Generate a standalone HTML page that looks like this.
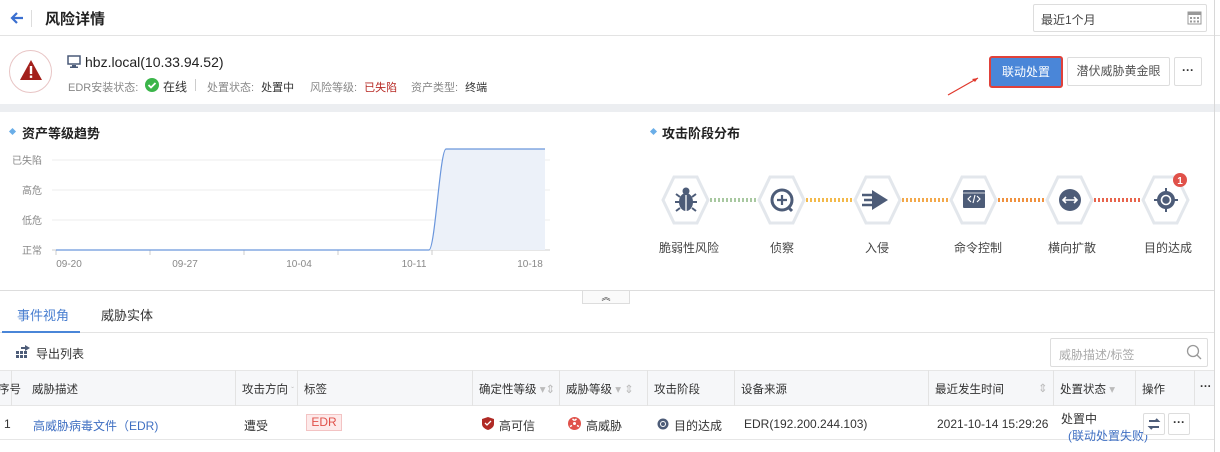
<!DOCTYPE html><html><head><meta charset="utf-8"><style>
*{margin:0;padding:0;box-sizing:border-box}
body{width:1220px;height:452px;overflow:hidden;background:#fff;font-family:"Liberation Sans","Noto Sans CJK SC",sans-serif;font-size:12px;color:#333;position:relative}
.a{position:absolute}
.btn{position:absolute;border:1px solid #ddd;border-radius:2px;background:#fff;text-align:center;font-size:12px;color:#555}
</style></head><body>
<!-- header -->
<div class="a" style="left:0;top:0;width:1220px;height:36px;border-bottom:1px solid #e3e3e3"></div>
<svg class="a" style="left:9px;top:11px" width="16" height="14"><path d="M14 7H3M8 2L3 7l5 5" stroke="#3a6fd0" stroke-width="2.2" fill="none"/></svg>
<div class="a" style="left:31px;top:10px;width:1px;height:17px;background:#ddd"></div>
<div class="a" style="left:45px;top:8px;font-size:15px;font-weight:bold;color:#222">风险详情</div>
<div class="a" style="left:1033px;top:4px;width:174px;height:28px;border:1px solid #ddd;border-radius:2px"></div>
<div class="a" style="left:1041px;top:11px;color:#444">最近1个月</div>
<svg class="a" style="left:1187px;top:10px" width="15" height="15"><rect x="1" y="2" width="13" height="12" fill="none" stroke="#999"/><rect x="1" y="2" width="13" height="3" fill="#999"/><g fill="#999"><rect x="3" y="7" width="2" height="2"/><rect x="6.5" y="7" width="2" height="2"/><rect x="10" y="7" width="2" height="2"/><rect x="3" y="10.5" width="2" height="2"/><rect x="6.5" y="10.5" width="2" height="2"/><rect x="10" y="10.5" width="2" height="2"/></g></svg>
<!-- info -->
<div class="a" style="left:9px;top:50px;width:43px;height:43px;border:1px solid #e8c5c5;border-radius:50%"></div>
<svg class="a" style="left:19px;top:59px" width="24" height="22"><path d="M12 1L23 21H1Z" fill="#a3201c"/><rect x="10.8" y="7" width="2.4" height="8" fill="#fff"/><rect x="10.8" y="16.5" width="2.4" height="2.4" fill="#fff"/></svg>
<svg class="a" style="left:67px;top:55px" width="14" height="13"><rect x="1" y="1" width="12" height="8" fill="none" stroke="#4a5a78" stroke-width="1.5"/><rect x="5" y="10" width="4" height="2" fill="#4a5a78"/><rect x="3" y="11.5" width="8" height="1.5" fill="#4a5a78"/></svg>
<div class="a" style="left:85px;top:54px;font-size:14px;color:#222">hbz.local(10.33.94.52)</div>
<div class="a" style="left:68px;top:79px;color:#888;font-size:11px">EDR安装状态:</div>
<svg class="a" style="left:145px;top:78px" width="14" height="14"><circle cx="7" cy="7" r="7" fill="#3bb54a"/><path d="M3.5 7l2.5 2.5 4.5-4.5" stroke="#fff" stroke-width="1.8" fill="none"/></svg>
<div class="a" style="left:163px;top:78px;color:#333">在线</div>
<div class="a" style="left:195px;top:79px;width:1px;height:12px;background:#ccc"></div>
<div class="a" style="left:207px;top:79px;color:#888;font-size:11px">处置状态: <span style="color:#333;margin-left:4px">处置中</span></div>
<div class="a" style="left:310px;top:79px;color:#888;font-size:11px">风险等级: <span style="color:#b72a25;margin-left:4px">已失陷</span></div>
<div class="a" style="left:411px;top:79px;color:#888;font-size:11px">资产类型: <span style="color:#333;margin-left:4px">终端</span></div>
<svg class="a" style="left:945px;top:76px" width="36" height="22"><path d="M3 19L33 2" stroke="#e0382c" stroke-width="1.2"/><path d="M33 2l-6 1 3 3z" fill="#e0382c"/></svg>
<div class="a" style="left:989px;top:56px;width:74px;height:32px;background:#4a86d8;border:2px solid #e0413a;border-radius:3px;color:#fff;text-align:center;line-height:28px">联动处置</div>
<div class="btn" style="left:1067px;top:57px;width:103px;height:29px;line-height:27px">潜伏威胁黄金眼</div>
<div class="btn" style="left:1174px;top:57px;width:28px;height:29px;line-height:24px;font-weight:bold;color:#333">···</div>
<div class="a" style="left:0;top:104px;width:1220px;height:8px;background:#eceef1"></div>
<div class="a" style="left:1214px;top:0;width:1px;height:452px;background:#d8d8d8"></div>
<!-- chart left -->
<div class="a" style="left:10px;top:129px;width:5px;height:5px;background:#6aaee8;transform:rotate(45deg)"></div>
<div class="a" style="left:22px;top:123px;font-size:13px;font-weight:bold;color:#222">资产等级趋势</div>
<svg class="a" style="left:0;top:140px" width="560" height="135" font-family="Liberation Sans,Noto Sans CJK SC,sans-serif" font-size="10" fill="#888">
<g stroke="#eee"><line x1="52" y1="20" x2="550" y2="20"/><line x1="52" y1="50" x2="550" y2="50"/><line x1="52" y1="80" x2="550" y2="80"/></g>
<line x1="52" y1="110" x2="550" y2="110" stroke="#ccc"/>
<g stroke="#ccc"><line x1="56" y1="110" x2="56" y2="115"/><line x1="150" y1="110" x2="150" y2="115"/><line x1="244" y1="110" x2="244" y2="115"/><line x1="338" y1="110" x2="338" y2="115"/><line x1="432" y1="110" x2="432" y2="115"/></g>
<text x="42" y="24" text-anchor="end">已失陷</text><text x="42" y="54" text-anchor="end">高危</text><text x="42" y="84" text-anchor="end">低危</text><text x="42" y="114" text-anchor="end">正常</text>
<path d="M429 110C435 110 440 9 446 9L545 9L545 110Z" fill="#ecf1f9"/>
<path d="M56 110L429 110C435 110 440 9 446 9L545 9" stroke="#6a96dc" fill="none" stroke-width="1.2"/>
<g text-anchor="middle"><text x="69" y="127">09-20</text><text x="185" y="127">09-27</text><text x="299" y="127">10-04</text><text x="414" y="127">10-11</text><text x="530" y="127">10-18</text></g>
</svg>
<!-- chart right -->
<div class="a" style="left:651px;top:129px;width:5px;height:5px;background:#6aaee8;transform:rotate(45deg)"></div>
<div class="a" style="left:662px;top:123px;font-size:13px;font-weight:bold;color:#222">攻击阶段分布</div>
<svg class="a" style="left:640px;top:170px" width="580" height="65">
<g stroke-width="4" stroke-dasharray="2 2"><line x1="70" y1="30" x2="118" y2="30" stroke="#a8c8a0"/><line x1="166" y1="30" x2="214" y2="30" stroke="#f3b94a"/><line x1="262" y1="30" x2="310" y2="30" stroke="#f3a84a"/><line x1="358" y1="30" x2="406" y2="30" stroke="#f0913e"/><line x1="454" y1="30" x2="502" y2="30" stroke="#e8644c"/></g>
<g fill="#fff" stroke="#e3e7ec" stroke-width="3">
<path d="M34 7L57 7L68 30L57 53L34 53L23 30Z"/>
<path d="M34 7L57 7L68 30L57 53L34 53L23 30Z" transform="translate(96,0)"/>
<path d="M34 7L57 7L68 30L57 53L34 53L23 30Z" transform="translate(192,0)"/>
<path d="M34 7L57 7L68 30L57 53L34 53L23 30Z" transform="translate(288,0)"/>
<path d="M34 7L57 7L68 30L57 53L34 53L23 30Z" transform="translate(384,0)"/>
<path d="M34 7L57 7L68 30L57 53L34 53L23 30Z" transform="translate(480,0)"/>
</g>
<g fill="#4d5c78" stroke="#4d5c78">
<ellipse cx="46" cy="32" rx="7" ry="9" stroke="none"/><circle cx="46" cy="21" r="3.5" stroke="none"/><path d="M36 24l4 3M56 24l-4 3M35 32h5M57 32h-5M36 41l4-3M56 41l-4-3" stroke-width="2" fill="none"/><line x1="46" y1="25" x2="46" y2="41" stroke="#fff" stroke-width="1.3"/>
<circle cx="142" cy="30" r="10" fill="none" stroke-width="3"/><path d="M137 30h10M142 25v10" stroke-width="2.2"/><path d="M148 37l4 4" stroke-width="3"/>
<path d="M232 20L248 30L232 40Z" stroke="none"/><path d="M222 25h10M224 30h12M222 35h10" stroke-width="2.5"/>
<rect x="323" y="20" width="22" height="18" rx="1" stroke="none"/><path d="M331 26l-3 3 3 3M337 26l3 3-3 3M335 25l-2 8" stroke="#fff" stroke-width="1.1" fill="none"/><line x1="323" y1="23" x2="345" y2="23" stroke="#fff" stroke-width=".8"/>
<circle cx="430" cy="30" r="11" stroke="none"/><path d="M423 30h14M426 27l-3 3 3 3M434 27l3 3-3 3" stroke="#fff" stroke-width="1.6" fill="none"/>
<circle cx="526" cy="30" r="9" stroke="none"/><circle cx="526" cy="30" r="4.5" fill="none" stroke="#fff" stroke-width="1.6"/><path d="M526 18v4M526 38v4M514 30h4M534 30h4" stroke-width="2"/>
</g>
<circle cx="540" cy="10" r="7" fill="#e0514a"/><text x="540" y="14" fill="#fff" font-size="10" font-weight="bold" text-anchor="middle" font-family="Liberation Sans">1</text>
</svg>
<div class="a" style="top:239px;left:0;width:1220px;color:#444">
<span class="a" style="left:659px">脆弱性风险</span><span class="a" style="left:770px">侦察</span><span class="a" style="left:865px">入侵</span><span class="a" style="left:954px">命令控制</span><span class="a" style="left:1048px">横向扩散</span><span class="a" style="left:1144px">目的达成</span></div>
<!-- tabs -->
<div class="a" style="left:0;top:290px;width:1214px;height:1px;background:#ddd"></div>
<div class="a" style="left:582px;top:291px;width:48px;height:13px;border:1px solid #ddd;border-top:none;background:#fafafa;text-align:center;font-size:9px;line-height:12px;color:#333">︽</div>
<div class="a" style="left:17px;top:305px;font-size:13px;color:#4a7fd0">事件视角</div>
<div class="a" style="left:101px;top:305px;font-size:13px;color:#333">威胁实体</div>
<div class="a" style="left:0;top:332px;width:1214px;height:1px;background:#e3e3e3"></div>
<div class="a" style="left:2px;top:331px;width:78px;height:2px;background:#4a86d8"></div>
<svg class="a" style="left:16px;top:345px" width="15" height="14"><g fill="#4d5c78"><rect x="0" y="6" width="3" height="3"/><rect x="4" y="6" width="3" height="3"/><rect x="8" y="6" width="3" height="3"/><rect x="0" y="10" width="3" height="3"/><rect x="4" y="10" width="3" height="3"/><rect x="8" y="10" width="3" height="3"/><path d="M9 0l5 3-5 3z"/><rect x="5" y="2" width="4" height="2"/></g></svg>
<div class="a" style="left:36px;top:345px;color:#333">导出列表</div>
<div class="a" style="left:1050px;top:338px;width:158px;height:29px;border:1px solid #ddd;border-radius:2px"></div>
<div class="a" style="left:1059px;top:346px;color:#aaa">威胁描述/标签</div>
<svg class="a" style="left:1186px;top:344px" width="16" height="16"><circle cx="7" cy="7" r="5.5" fill="none" stroke="#999" stroke-width="1.3"/><path d="M11 11l4 4" stroke="#999" stroke-width="1.3"/></svg>
<!-- table -->
<div class="a" style="left:0;top:370px;width:1214px;height:36px;background:#f6f7f9;border-top:1px solid #e6e6e6;border-bottom:1px solid #e6e6e6"></div>
<div class="a" style="left:0;top:406px;width:1214px;height:34px;border-bottom:1px solid #e6e6e6"></div>
<div class="a" style="top:370px;left:0;height:36px;width:1214px">
<div class="a" style="left:11px;top:0;width:1px;height:36px;background:#e3e3e3"></div>
<div class="a" style="left:235px;top:0;width:1px;height:36px;background:#e3e3e3"></div>
<div class="a" style="left:297px;top:0;width:1px;height:36px;background:#e3e3e3"></div>
<div class="a" style="left:472px;top:0;width:1px;height:36px;background:#e3e3e3"></div>
<div class="a" style="left:559px;top:0;width:1px;height:36px;background:#e3e3e3"></div>
<div class="a" style="left:647px;top:0;width:1px;height:36px;background:#e3e3e3"></div>
<div class="a" style="left:734px;top:0;width:1px;height:36px;background:#e3e3e3"></div>
<div class="a" style="left:928px;top:0;width:1px;height:36px;background:#e3e3e3"></div>
<div class="a" style="left:1053px;top:0;width:1px;height:36px;background:#e3e3e3"></div>
<div class="a" style="left:1135px;top:0;width:1px;height:36px;background:#e3e3e3"></div>
<div class="a" style="left:1194px;top:0;width:1px;height:36px;background:#e3e3e3"></div>
</div>
<div class="a" style="top:381px;left:0;width:1214px;color:#333;font-size:11.5px">
<span class="a" style="left:-2px">序号</span><span class="a" style="left:32px">威胁描述</span><span class="a" style="left:242px">攻击方向 <span style="color:#bbb;font-size:8px">ˇ</span></span><span class="a" style="left:304px">标签</span><span class="a" style="left:479px">确定性等级 <span style="color:#bbb">▾⇕</span></span><span class="a" style="left:566px">威胁等级 <span style="color:#bbb">▾ ⇕</span></span><span class="a" style="left:654px">攻击阶段</span><span class="a" style="left:741px">设备来源</span><span class="a" style="left:935px">最近发生时间</span><span class="a" style="left:1038px;color:#bbb">⇕</span><span class="a" style="left:1060px">处置状态 <span style="color:#bbb">▾</span></span><span class="a" style="left:1142px">操作</span><span class="a" style="left:1200px;font-weight:bold">···</span></div>
<div class="a" style="top:417px;left:0;width:1214px;color:#333">
<span class="a" style="left:4px">1</span><span class="a" style="left:33px;color:#3f6fc2">高威胁病毒文件（EDR)</span><span class="a" style="left:244px">遭受</span>
<span class="a" style="left:306px;top:-3px;width:36px;height:17px;background:#fdeaea;border:1px solid #f3c3c3;color:#e0514a;text-align:center;line-height:15px">EDR</span>
<svg class="a" style="left:482px;top:0" width="12" height="13"><path d="M6 0L12 2V7C12 10 9 12 6 13 3 12 0 10 0 7V2Z" fill="#b02a25"/><path d="M3 6l2 2 4-4" stroke="#fff" stroke-width="1.3" fill="none"/></svg><span class="a" style="left:499px">高可信</span>
<svg class="a" style="left:568px;top:0" width="13" height="13"><circle cx="6.5" cy="6.5" r="6.5" fill="#e0514a"/><circle cx="6.5" cy="6.5" r="1.5" fill="#fff"/><path d="M6.5 3.5l-2 -1.5M6.5 3.5l2-1.5M4 8.5l-2 1M9 8.5l2 1" stroke="#fff" stroke-width="1.5"/></svg><span class="a" style="left:586px">高威胁</span>
<svg class="a" style="left:657px;top:1px" width="12" height="12"><circle cx="6" cy="6" r="5.5" fill="#4d5c78"/><circle cx="6" cy="6" r="2.5" fill="none" stroke="#fff"/></svg><span class="a" style="left:674px">目的达成</span>
<span class="a" style="left:744px">EDR(192.200.244.103)</span><span class="a" style="left:937px">2021-10-14 15:29:26</span>
<span class="a" style="left:1061px;top:-7px">处置中</span><span class="a" style="left:1068px;top:10px;color:#3f6fc2">(联动处置失败)</span>
</div>
<div class="btn" style="left:1143px;top:413px;width:22px;height:22px"></div>
<svg class="a" style="left:1147px;top:417px" width="14" height="14"><path d="M2 4h9l-2-2M12 10H3l2 2" stroke="#4d5c78" stroke-width="2" fill="none"/></svg>
<div class="btn" style="left:1168px;top:413px;width:22px;height:22px;line-height:17px;font-weight:bold;color:#333">···</div>
</body></html>
